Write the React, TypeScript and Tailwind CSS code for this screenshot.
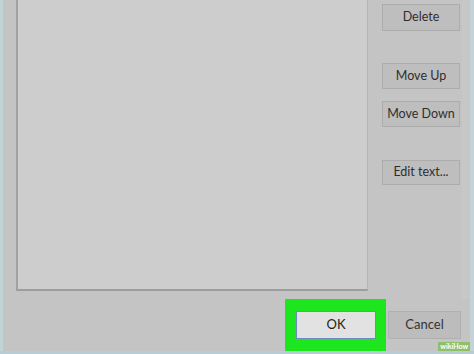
import React from "react";

const btn =
  "flex items-center justify-center bg-[#bebebe] border border-[#acacac] text-[12.5px] text-[#2e2e2e]";

export default function App() {
  return (
    <div
      className="w-[474px] h-[354px] flex flex-col bg-[#c4c4c4] overflow-hidden"
      style={{ fontFamily: 'Lato, "Open Sans", sans-serif' }}
    >
      <div className="flex flex-row h-[351px]">
        <div className="w-[3px] bg-[#c3d4d4]" />
        <div className="flex flex-col w-[467px]">
          <div className="flex flex-row h-[299px]">
            <div className="ml-[13px] w-[352px] h-[291px] bg-[#cdcdcd] border-l-2 border-b-2 border-r border-l-[#a2a2a2] border-b-[#9d9d9d] border-r-[#b5b5b5]" />
            <div className="ml-[14px] w-[78px] flex flex-col">
              <div className={`${btn} mt-[4px] h-[27px]`}>Delete</div>
              <div className={`${btn} mt-[32px] h-[26px]`}>Move Up</div>
              <div className={`${btn} mt-[12px] h-[26px]`}>Move Down</div>
              <div className={`${btn} mt-[33px] h-[25px]`}>Edit text...</div>
            </div>
            <div className="ml-[2px] w-[8px] bg-[#c7c7c7]" />
          </div>
          <div className="flex flex-row h-[52px]">
            <div className="ml-[282px] w-[101px] h-[52px] bg-[#1ee61e] pl-[11px] pt-[12px]">
              <div className="w-[80px] h-[28px] bg-[#e2e2e2] border border-[#6f8cc0] flex items-center justify-center text-[13px] text-[#222]">
                OK
              </div>
            </div>
            <div className="ml-[2px] mt-[12px] w-[73px] h-[28px] bg-[#bcbcbc] border border-[#b0b0b0] flex items-center justify-center text-[13px] text-[#333]">
              Cancel
            </div>
            <div className="relative flex-1">
              <div className="absolute right-0 bottom-0 px-[2px] h-[9px] bg-[#8fbf6a] text-[7px] leading-[9px] text-white font-bold">
                wikiHow
              </div>
            </div>
          </div>
        </div>
        <div className="w-[4px] bg-[#c3d3d6]" />
      </div>
      <div className="h-[3px] bg-[#b8ccd6]" />
    </div>
  );
}
